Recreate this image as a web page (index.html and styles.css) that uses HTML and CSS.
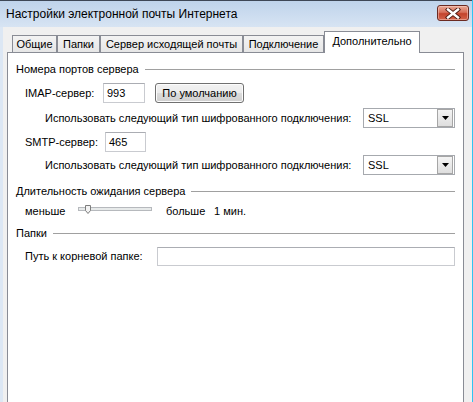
FILE: index.html
```html
<!DOCTYPE html>
<html lang="ru">
<head>
<meta charset="utf-8">
<title>Настройки электронной почты Интернета</title>
<link rel="stylesheet" href="styles.css">
</head>
<body>
<div class="window">
  <div class="titlebar">
    <span class="title">Настройки электронной почты Интернета</span>
    <div class="close">
      <svg width="16" height="11" viewBox="0 0 16 11">
        <path d="M3 1.5 L13 9.5 M13 1.5 L3 9.5" stroke="#4a1a12" stroke-width="4.2" stroke-linecap="square" fill="none"/>
        <path d="M3 1.5 L13 9.5 M13 1.5 L3 9.5" stroke="#ffffff" stroke-width="2.4" stroke-linecap="square" fill="none"/>
      </svg>
    </div>
  </div>
  <div class="client">
    <div class="tabs">
      <div class="tab t-general">Общие</div>
      <div class="tab t-folders">Папки</div>
      <div class="tab t-outgoing">Сервер исходящей почты</div>
      <div class="tab t-connect">Подключение</div>
      <div class="tab active t-advanced">Дополнительно</div>
    </div>
    <div class="panel">
      <div class="group-head"><span>Номера портов сервера</span><i class="rule"></i></div>

      <div class="row r-imap">
        <span class="lbl w-imap">IMAP-сервер:</span>
        <div class="textbox port-imap">993</div>
        <div class="btn">По умолчанию</div>
      </div>

      <div class="row enc r-enc1">
        <span class="lbl">Использовать следующий тип шифрованного подключения:</span>
        <div class="select">
          <span class="sel-text">SSL</span>
          <span class="drop"><svg width="7" height="4" viewBox="0 0 7 4"><path d="M0 0 H7 L3.5 4 Z" fill="#000"/></svg></span>
        </div>
      </div>

      <div class="row r-smtp">
        <span class="lbl w-smtp">SMTP-сервер:</span>
        <div class="textbox port-smtp">465</div>
      </div>

      <div class="row enc r-enc2">
        <span class="lbl">Использовать следующий тип шифрованного подключения:</span>
        <div class="select">
          <span class="sel-text">SSL</span>
          <span class="drop"><svg width="7" height="4" viewBox="0 0 7 4"><path d="M0 0 H7 L3.5 4 Z" fill="#000"/></svg></span>
        </div>
      </div>

      <div class="group-head g-timeout"><span>Длительность ожидания сервера</span><i class="rule"></i></div>

      <div class="row r-slider">
        <span class="lbl w-less">меньше</span>
        <svg class="slider" width="74" height="10" viewBox="0 0 74 10">
          <rect x="0.5" y="2.5" width="73" height="3" fill="#e7eaea" stroke="#b6b9bd"/>
          <path d="M7.5 0.5 H12.5 V5.5 L10 8.5 L7.5 5.5 Z" fill="#f3f3f3" stroke="#7d7d7d"/>
        </svg>
        <span class="lbl w-more">больше</span>
        <span class="lbl">1 мин.</span>
      </div>

      <div class="group-head g-folders"><span>Папки</span><i class="rule"></i></div>

      <div class="row r-path">
        <span class="lbl w-path">Путь к корневой папке:</span>
        <div class="textbox path"></div>
      </div>
    </div>
  </div>
</div>
</body>
</html>
```

FILE: styles.css
```css
* { box-sizing: border-box; }

html, body {
  margin: 0;
  padding: 0;
}

body {
  width: 473px;
  height: 402px;
  overflow: hidden;
  background: #dce7f4;
  font-family: "Liberation Sans", Arial, sans-serif;
  font-size: 12px;
  color: #000;
}

.window {
  display: flex;
  flex-direction: column;
  height: 402px;
  border-right: 1px solid #2fc4f2;
}

/* title bar */
.titlebar {
  flex: none;
  height: 27px;
  display: flex;
  align-items: center;
  padding-left: 6px;
  background: linear-gradient(#bfd3eb, #d7e4f3);
  border-top: 1px solid #3e4756;
}

.title {
  flex: 1;
  font-size: 12px;
  white-space: nowrap;
}

.close {
  align-self: flex-start;
  margin-top: 4px;
  margin-right: 3px;
  width: 32px;
  height: 16px;
  border: 1px solid #6b2a22;
  border-radius: 3px;
  background: linear-gradient(#e8a897 0%, #d7705a 45%, #c3432c 55%, #d4644b 100%);
  display: flex;
  align-items: center;
  justify-content: center;
  box-shadow: inset 0 0 0 1px rgba(255, 220, 210, 0.45);
}

.close svg { display: block; }

/* client */
.client {
  flex: 1;
  min-height: 0;
  margin-left: 3px;
  padding: 4px 8px 0 4px;
  background: #f0f0f0;
  display: flex;
  flex-direction: column;
  overflow: hidden;
  font-size: 11px;
}

.tabs {
  flex: none;
  height: 21px;
  display: flex;
  align-items: flex-end;
  padding-left: 5px;
  position: relative;
  z-index: 1;
}

.tab {
  flex: none;
  height: 17px;
  border: 1px solid #898c95;
  border-bottom: none;
  background: linear-gradient(#f3f3f3, #e6e6e6);
  display: flex;
  align-items: center;
  justify-content: center;
  white-space: nowrap;
  padding-bottom: 1px;
}

.t-general { width: 45px; }
.t-folders { width: 43px; }
.t-outgoing { width: 143px; }
.t-connect { width: 81px; }

.tab.active {
  width: 96px;
  height: 22px;
  margin-bottom: -1px;
  background: #fff;
  padding-bottom: 3px;
}

.panel {
  flex: 1;
  border: 1px solid #898c95;
  border-bottom: none;
  background: #fff;
  padding: 9px 8px 0 8px;
  display: flex;
  flex-direction: column;
}

.group-head {
  height: 14px;
  display: flex;
  align-items: center;
  white-space: nowrap;
}

.rule {
  flex: 1;
  height: 1px;
  margin-left: 6px;
  background: #a0a0a0;
}

.g-timeout { margin-top: 9px; }
.g-folders { margin-top: 5px; }

.row {
  height: 20px;
  display: flex;
  align-items: center;
  padding-left: 9px;
  white-space: nowrap;
}

.r-imap { margin-top: 7px; }
.r-enc1 { margin-top: 5px; }
.r-smtp { margin-top: 4px; }
.r-enc2 { margin-top: 3px; }
.r-slider { margin-top: 3px; }
.r-path { margin-top: 6px; }

.enc { padding-left: 29px; }

.lbl { flex: none; }
.w-imap { width: 78px; }
.w-smtp { width: 80px; }
.w-less { width: 53px; }
.w-more { width: 48px; }
.w-path { width: 132px; }

.textbox {
  height: 20px;
  border: 1px solid #c9cbd0;
  border-top-color: #abadb3;
  background: #fff;
  display: flex;
  align-items: center;
  padding-left: 3px;
}

.port-imap { width: 42px; }
.port-smtp { width: 41px; }
.path { flex: 1; height: 19px; }

.btn {
  width: 89px;
  height: 20px;
  margin-left: 10px;
  border: 1px solid #707070;
  border-radius: 3px;
  background: linear-gradient(#f2f2f2 0%, #ebebeb 50%, #dddddd 50%, #cfcfcf 100%);
  box-shadow: inset 0 0 0 1px #fcfcfc;
  display: flex;
  align-items: center;
  justify-content: center;
}

.select {
  margin-left: auto;
  width: 92px;
  height: 20px;
  border: 1px solid #a6a9ae;
  background: #fff;
  display: flex;
  align-items: center;
  padding: 0 1px 0 4px;
}

.sel-text { flex: 1; }

.drop {
  width: 16px;
  height: 18px;
  border: 1px solid #a6a6a6;
  background: linear-gradient(#f4f4f4, #dedede);
  display: flex;
  align-items: center;
  justify-content: center;
}

.drop svg, .slider { display: block; flex: none; }

.slider { margin-right: 14px; margin-top: -3px; }
```
